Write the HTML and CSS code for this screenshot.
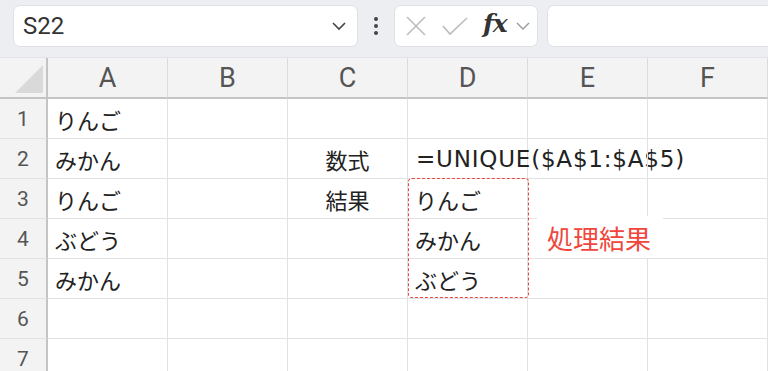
FILE: index.html
```html
<!doctype html>
<html>
  <head>
    <title>UNIQUE関数</title>
    <link rel="stylesheet" href="styles.css">
  </head>
  <body>
    <div class="toolbar">
      <div class="name-box">
        <span class="name">S22</span>
        <svg class="chev" width="16" height="10" viewBox="0 0 16 10"><polyline points="2,2 8,8 14,2" /></svg>
      </div>
      <div class="dots">
        <svg width="8" height="20" viewBox="0 0 8 20"><circle cx="4" cy="3" r="2" /><circle cx="4" cy="10" r="2" /><circle cx="4" cy="17" r="2" /></svg>
      </div>
      <div class="fx-box">
        <svg class="btn" width="24" height="20" viewBox="0 0 24 20"><line x1="3" y1="1" x2="21" y2="19" /><line x1="21" y1="1" x2="3" y2="19" /></svg>
        <svg class="btn ok" width="28" height="20" viewBox="0 0 28 20"><polyline points="2,10 9,18 26,2" /></svg>
        <span class="fx">fx</span>
        <svg class="chev small" width="16" height="10" viewBox="0 0 16 10"><polyline points="2,2 8,8 14,2" /></svg>
      </div>
      <div class="formula-input"></div>
    </div>

    <div class="sheet">
      <div class="grid">
        <div class="corner"><div class="tri"></div></div>
        <div class="colhead">A</div>
        <div class="colhead">B</div>
        <div class="colhead">C</div>
        <div class="colhead">D</div>
        <div class="colhead">E</div>
        <div class="colhead">F</div>

        <div class="rowhead">1</div>
        <div class="cell">りんご</div><div class="cell"></div><div class="cell"></div><div class="cell"></div><div class="cell"></div><div class="cell"></div>

        <div class="rowhead">2</div>
        <div class="cell">みかん</div><div class="cell"></div><div class="cell center">数式</div><div class="cell formula">=UNIQUE($A$1:$A$5)</div><div class="cell"></div><div class="cell"></div>

        <div class="rowhead">3</div>
        <div class="cell">りんご</div><div class="cell"></div><div class="cell center">結果</div><div class="cell">りんご</div><div class="cell"></div><div class="cell"></div>

        <div class="rowhead">4</div>
        <div class="cell">ぶどう</div><div class="cell"></div><div class="cell"></div><div class="cell">みかん</div><div class="cell"></div><div class="cell"></div>

        <div class="rowhead">5</div>
        <div class="cell">みかん</div><div class="cell"></div><div class="cell"></div><div class="cell">ぶどう</div><div class="cell"></div><div class="cell"></div>

        <div class="rowhead">6</div>
        <div class="cell"></div><div class="cell"></div><div class="cell"></div><div class="cell"></div><div class="cell"></div><div class="cell"></div>

        <div class="rowhead">7</div>
        <div class="cell"></div><div class="cell"></div><div class="cell"></div><div class="cell"></div><div class="cell"></div><div class="cell"></div>
      </div>

      <div class="spill-box"></div>
      <div class="note">処理結果</div>
    </div>
  </body>
</html>
```

FILE: styles.css
```css
body {
  margin: 0;
  width: 768px;
  height: 371px;
  overflow: hidden;
  background: #fff;
  font-family: "Noto Sans CJK JP", sans-serif;
  color: #222;
}
.toolbar {
  display: flex;
  align-items: center;
  height: 58px;
  background: #eceef2;
  padding-left: 13px;
  box-sizing: border-box;
  border-bottom: 1px solid #e2e4e8;
  overflow: hidden;
}
.name-box,
.fx-box,
.formula-input {
  flex: none;
  background: #fff;
  height: 42px;
  border: 1px solid #dfe1e5;
  border-radius: 7px;
  box-sizing: border-box;
  margin-top: -6px;
}
.name-box {
  width: 345px;
  display: flex;
  align-items: center;
  justify-content: space-between;
  padding: 0 10px 0 9px;
}
.name {
  font-family: Roboto, sans-serif;
  font-size: 24px;
  color: #333;
}
.chev polyline {
  fill: none;
  stroke: #444;
  stroke-width: 1.6;
}
.chev.small polyline {
  stroke: #999;
  stroke-width: 1.4;
}
.dots {
  flex: none;
  width: 36px;
  display: flex;
  justify-content: center;
  margin-top: -6px;
}
.dots circle {
  fill: #444;
}
.fx-box {
  width: 144px;
  display: flex;
  align-items: center;
  padding-left: 9px;
}
.btn line,
.btn polyline {
  fill: none;
  stroke: #bcbcbc;
  stroke-width: 1.6;
}
.btn.ok {
  margin-left: 13px;
}
.fx {
  font-family: "DejaVu Serif", serif;
  font-style: italic;
  font-weight: bold;
  font-size: 25px;
  color: #333;
  margin-left: 14px;
  margin-top: -4px;
  letter-spacing: -1px;
}
.chev.small {
  margin-left: 8px;
}
.formula-input {
  width: 240px;
  margin-left: 9px;
}

.sheet {
  position: relative;
}
.grid {
  display: grid;
  grid-template-columns: 48px repeat(6, 120px);
  grid-template-rows: 41px repeat(7, 40px);
}
.corner {
  background: #f3f3f3;
  border-bottom: 2px solid #c4c4c4;
  border-right: 2px solid #c4c4c4;
  box-sizing: border-box;
  position: relative;
}
.tri {
  position: absolute;
  left: 15px;
  top: 7px;
  width: 0;
  height: 0;
  border-left: 28px solid transparent;
  border-bottom: 28px solid #d9d9d9;
}
.colhead {
  background: #f3f3f3;
  border-bottom: 2px solid #c4c4c4;
  border-right: 1px solid #dcdcdc;
  box-sizing: border-box;
  display: flex;
  align-items: center;
  justify-content: center;
  font-family: Roboto, sans-serif;
  font-size: 27px;
  color: #555;
}
.rowhead {
  background: #f3f3f3;
  border-right: 2px solid #c4c4c4;
  border-bottom: 1px solid #e0e0e0;
  box-sizing: border-box;
  display: flex;
  align-items: center;
  justify-content: center;
  font-family: Roboto, sans-serif;
  font-size: 21px;
  color: #555;
}
.cell {
  border-right: 1px solid #e2e2e2;
  border-bottom: 1px solid #e2e2e2;
  box-sizing: border-box;
  display: flex;
  align-items: center;
  padding-left: 7px;
  font-size: 22px;
  white-space: nowrap;
}
.center {
  justify-content: center;
  padding-left: 0;
}
.formula {
  font-family: "DejaVu Sans", "Noto Sans CJK JP", sans-serif;
  font-size: 23px;
  letter-spacing: 0.8px;
  padding-left: 8px;
}
.spill-box {
  position: absolute;
  left: 408px;
  top: 120px;
  width: 121px;
  height: 120px;
  border: 1.5px dashed #e8483f;
  border-radius: 4px;
  box-sizing: border-box;
}
.note {
  position: absolute;
  left: 537px;
  top: 158px;
  width: 126px;
  height: 42px;
  background: #fff;
  color: #f0463c;
  font-size: 26px;
  display: flex;
  align-items: center;
  padding-left: 10px;
  box-sizing: border-box;
}
```
